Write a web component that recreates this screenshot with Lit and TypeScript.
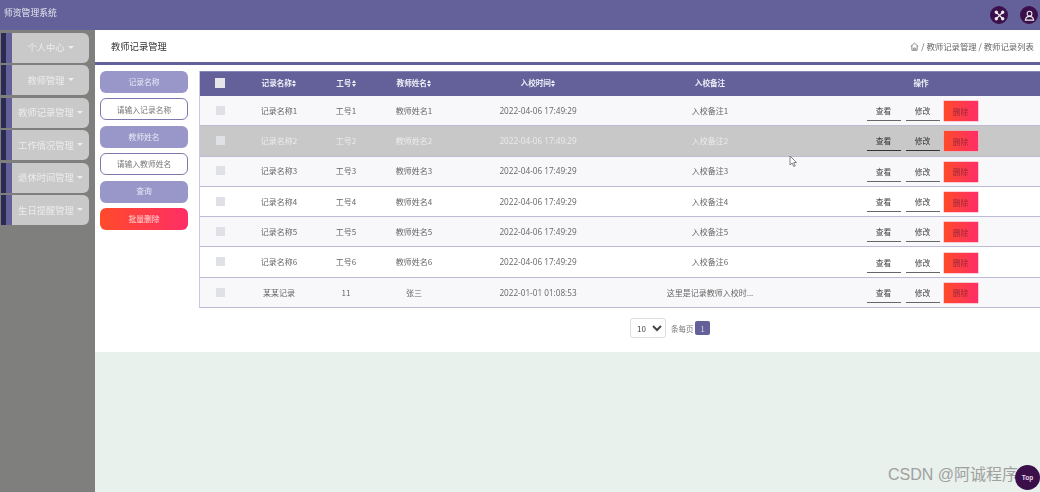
import { LitElement, html, css } from "lit";
import { customElement } from "lit/decorators.js";

const rows = [
  ["记录名称1", "工号1", "教师姓名1", "2022-04-06 17:49:29", "入校备注1"],
  ["记录名称2", "工号2", "教师姓名2", "2022-04-06 17:49:29", "入校备注2"],
  ["记录名称3", "工号3", "教师姓名3", "2022-04-06 17:49:29", "入校备注3"],
  ["记录名称4", "工号4", "教师姓名4", "2022-04-06 17:49:29", "入校备注4"],
  ["记录名称5", "工号5", "教师姓名5", "2022-04-06 17:49:29", "入校备注5"],
  ["记录名称6", "工号6", "教师姓名6", "2022-04-06 17:49:29", "入校备注6"],
  ["某某记录", "11", "张三", "2022-01-01 01:08:53", "这里是记录教师入校时..."],
];
const menu = ["个人中心", "教师管理", "教师记录管理", "工作情况管理", "退休时间管理", "生日提醒管理"];

const sort = html`<svg class="sort" width="4" height="7" viewBox="0 0 4 7" fill="#eeeef6">
  <path d="M2 0l2 3H0zM2 7L0 4h4z" />
</svg>`;

@customElement("app-root")
export class AppRoot extends LitElement {
  static styles = css`
    :host {
      display: block;
      width: 1040px;
      height: 492px;
      overflow: hidden;
      position: relative;
      background: #e8f1ec;
      font-family: "Noto Sans CJK SC", "Noto Sans", sans-serif;
      color: #555;
    }
    .page { width: 1040px; height: 492px; display: flex; flex-direction: column; filter: blur(0.55px); }
    .top {
      height: 30px; flex: none; background: #63609a; display: flex; align-items: center;
      padding: 0 2px 5px 4px; box-sizing: border-box; color: #e6e6ee; font-size: 8.8px;
    }
    .top .name { flex: 1; }
    .circle {
      width: 18px; height: 18px; border-radius: 50%; background: #3a0f4a; display: flex;
      align-items: center; justify-content: center; margin-left: 12px; margin-top: 5px;
    }
    .body { flex: 1; display: flex; min-height: 0; }
    .side {
      width: 95px; flex: none; background: #7f7f7d; padding: 2.5px 6px 0 1px; box-sizing: border-box;
      display: flex; flex-direction: column; gap: 2.5px;
    }
    .item { height: 30px; display: flex; }
    .s1 { width: 5px; background: #2b2a55; }
    .s2 { width: 6px; background: #63609a; }
    .lbl {
      flex: 1; background: #c9c9c9; border-radius: 0 6px 6px 0; color: #ececec; font-size: 9.3px;
      display: flex; align-items: center; justify-content: center; gap: 3px; padding-bottom: 1px;
    }
    .caret { width: 0; height: 0; border: 3px solid transparent; border-top-color: #eee; border-bottom: 0; }
    .main { flex: 1; min-width: 0; display: flex; flex-direction: column; }
    .panel { background: #fff; height: 322px; flex: none; overflow: hidden; }
    .crumb {
      height: 32px; box-sizing: content-box; border-bottom: 3px solid #63609a; display: flex;
      align-items: center; justify-content: space-between; padding: 0 6px 0 16px;
    }
    .title { font-size: 9.3px; color: #333; }
    .path { font-size: 8.4px; color: #666; display: flex; align-items: center; gap: 2px; }
    .content { display: flex; padding: 6px 0 0 5px; gap: 11px; }
    .search { width: 88px; flex: none; display: flex; flex-direction: column; gap: 5.4px; }
    .search > div {
      height: 22px; border-radius: 6px; font-size: 7.8px; display: flex; align-items: center;
      justify-content: center; box-sizing: border-box; padding-bottom: 1.5px;
    }
    .lab { background: #9996c9; color: #e9e9f4; }
    .search > .inp { background: #fff; border: 1.5px solid #7c79ae; color: #777; padding-bottom: 0.5px; }
    .del { background: linear-gradient(90deg, #ff4a2a, #ff2e66); color: #fbdada; }
    .table { width: 845px; flex: none; border-left: 1px solid #c9c8dd; }
    .tr {
      display: grid; grid-template-columns: 40px 78px 56px 80px 168px 176px 246px;
      align-items: center; text-align: center; font-size: 8px; color: #666;
      height: 30.3px; box-sizing: border-box; border-bottom: 1.5px solid #bcbad4; background: #fff;
      padding-bottom: 0.5px;
    }
    .tr.odd { background: #f8f8fa; }
    .tr.hover { background: #c8c8c8; color: #ebebeb; }
    .tr.head {
      height: 25px; background: #63609a; color: #eeeef6; font-weight: 700; font-size: 7.6px;
      border-top: 1px solid #8886b4; border-bottom: none; padding-bottom: 3px;
    }
    .time { font-size: 8.2px; font-family: "Open Sans", "Noto Sans", sans-serif; }
    .cb { width: 9px; height: 9px; background: #dfe1e6; margin: 0 auto; }
    .head .cb { background: #e6e6ea; width: 10px; height: 10px; }
    .sort { margin-left: 0.5px; vertical-align: -0.5px; }
    .ops { display: flex; justify-content: center; gap: 5px; padding-left: 2px; margin-top: 1.500px; }
    .op {
      width: 34px; height: 20px; box-sizing: border-box; font-size: 7.8px; color: #444;
      display: flex; align-items: center; justify-content: center; border-bottom: 1px solid #666;
    }
    .hover .op { border-bottom-color: #333; color: #333; }
    .op.red {
      background: linear-gradient(90deg, #ff4a2a, #ff2e66); border: none; color: #9a2838;
      box-shadow: 0 0 0 0.5px #ff9eb0; margin-left: -1px;
    }
    .pager {
      display: flex; align-items: center; justify-content: flex-start; gap: 5px;
      padding: 10px 0 0 535px; font-size: 7.5px; color: #777;
    }
    select {
      width: 36px; height: 20px; font-size: 8px; color: #444; background: #fff;
      border: 1px solid #dedede; border-radius: 3px; padding: 0 0 0 2px; font-family: inherit;
    }
    .pg {
      width: 15px; height: 14px; background: #63609a; color: #d8d8ea; border-radius: 2px;
      display: flex; align-items: center; justify-content: center; font-size: 7.5px; margin-left: -3.5px;
    }
    .mark {
      position: absolute; left: 888px; top: 461px; font-size: 16px; color: #a0a0a0;
      font-family: "Liberation Sans", "Noto Sans CJK SC", sans-serif; white-space: nowrap;
    }
    .topbtn {
      position: absolute; left: 1015px; top: 465px; width: 25px; height: 25px; border-radius: 50%;
      background: #3a0f4a; color: #e8d8ee; font-size: 6.5px; font-weight: 700; display: flex;
      align-items: center; justify-content: center; font-family: "Liberation Sans", sans-serif;
    }
    .cursor { position: absolute; left: 789px; top: 155px; }
  `;

  render() {
    return html`
      <div class="page">
        <div class="top">
          <div class="name">师资管理系统</div>
          <div class="circle">
            <svg width="11" height="11" viewBox="0 0 12 12" fill="none" stroke="#eee" stroke-width="1.3">
              <path d="M3 3l6 6M9 3l-6 6" /><circle cx="2.5" cy="2.5" r="1.2" fill="#eee" /><circle cx="9.5" cy="2.5" r="1.2" fill="#eee" />
              <circle cx="2.5" cy="9.5" r="1.2" fill="#eee" /><circle cx="9.5" cy="9.5" r="1.2" fill="#eee" />
            </svg>
          </div>
          <div class="circle">
            <svg width="11" height="11" viewBox="0 0 12 12" fill="none" stroke="#eee" stroke-width="1.2">
              <circle cx="6" cy="4" r="2.6" /><path d="M1.5 11c.5-3 2-4 4.500-4s4 1 4.500 4z" />
            </svg>
          </div>
        </div>
        <div class="body">
          <div class="side">
            ${menu.map(
              (t) => html`<div class="item"><div class="s1"></div><div class="s2"></div>
                <div class="lbl">${t}<span class="caret"></span></div></div>`
            )}
          </div>
          <div class="main">
            <div class="panel">
              <div class="crumb">
                <div class="title">教师记录管理</div>
                <div class="path">
                  <svg width="9" height="9" viewBox="0 0 12 12" fill="none" stroke="#666" stroke-width="1">
                    <path d="M1 6l5-4.500 5 4.500M2.500 5v6h7V5M5 11V8h2v3" />
                  </svg>
                  <span>/ 教师记录管理 / 教师记录列表</span>
                </div>
              </div>
              <div class="content">
                <div class="search">
                  <div class="lab">记录名称</div>
                  <div class="inp">请输入记录名称</div>
                  <div class="lab">教师姓名</div>
                  <div class="inp">请输入教师姓名</div>
                  <div class="lab">查询</div>
                  <div class="del">批量删除</div>
                </div>
                <div class="table">
                  <div class="tr head">
                    <div><div class="cb"></div></div>
                    <div>记录名称${sort}</div>
                    <div>工号${sort}</div>
                    <div>教师姓名${sort}</div>
                    <div>入校时间${sort}</div>
                    <div>入校备注</div>
                    <div>操作</div>
                  </div>
                  ${rows.map(
                    (r, i) => html`<div class="tr ${i === 1 ? "hover" : i % 2 === 0 ? "odd" : ""}">
                      <div><div class="cb"></div></div>
                      <div>${r[0]}</div><div>${r[1]}</div><div>${r[2]}</div>
                      <div class="time">${r[3]}</div><div>${r[4]}</div>
                      <div class="ops">
                        <div class="op">查看</div><div class="op">修改</div><div class="op red">删除</div>
                      </div>
                    </div>`
                  )}
                </div>
              </div>
              <div class="pager">
                <select><option>10</option></select>
                <span>条每页</span>
                <div class="pg">1</div>
              </div>
            </div>
          </div>
        </div>
      </div>
      <svg class="cursor" width="9" height="13" viewBox="0 0 9 13" fill="#fff" stroke="#666" stroke-width="0.8">
        <path d="M1 1v9l2.200-2 1.500 3.500 1.500-.6L4.700 7.500H7.500z" />
      </svg>
      <div class="mark">CSDN @阿诚程序</div>
      <div class="topbtn">Top</div>
    `;
  }
}
